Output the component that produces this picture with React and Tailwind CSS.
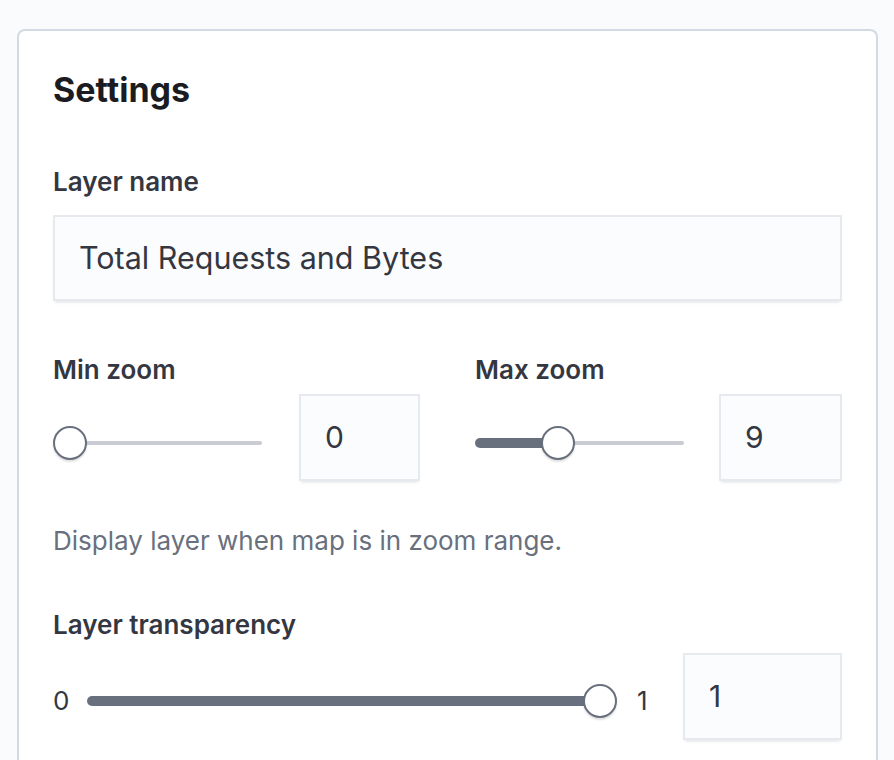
import React from 'react';

function RangeSlider({ value, max, filled }) {
  const pct = (value / max) * 100;
  return (
    <div className="relative h-[34px] flex-1">
      {/* track */}
      <div className="absolute left-[2px] right-0 top-1/2 h-[4px] -translate-y-1/2 rounded-full bg-[#c9ccd3]" />
      {filled && (
        <div
          className="absolute left-0 top-1/2 h-[10px] -translate-y-1/2 rounded-full bg-[#69707d]"
          style={{ width: `calc(${pct / 100} * (100% - 34px) + 17px)` }}
        />
      )}
      <div
        className="absolute top-0 h-[34px] w-[34px] rounded-full border-2 border-[#69707d] bg-white shadow-[0_2px_2px_rgba(0,0,0,0.12)]"
        style={{ left: `calc(${pct / 100} * (100% - 34px))` }}
      />
    </div>
  );
}

function NumberBox({ value, className = 'w-[121px]' }) {
  return (
    <div
      className={`${className} flex h-[87px] shrink-0 items-center border-2 border-[#e6e9ee] bg-[#fbfcfd] pl-[24px] text-[30px] text-[#343741] shadow-[0_3px_3px_-2px_rgba(152,162,179,0.35)]`}
    >
      {value}
    </div>
  );
}

function Label({ children, className = '' }) {
  return (
    <div className={`text-[26px] leading-[30px] font-semibold text-[#343741] ${className}`}>
      {children}
    </div>
  );
}

export default function App() {
  return (
    <div className="min-h-screen bg-[#fafbfd] pl-[17px] pr-[16px] pt-[29px] font-['Inter',sans-serif]">
      <div className="rounded-t-[8px] border-2 border-b-0 border-[#d3dae6] bg-white px-[34px] pt-[39px] pb-[60px]">
        <h2 className="text-[34px] leading-[40px] font-bold text-[#1a1c21]">Settings</h2>

        <Label className="mt-[57px]">Layer name</Label>
        <div className="mt-[18px] flex h-[86px] items-center border-2 border-[#e6e9ee] bg-[#fbfcfd] pl-[24px] text-[30.5px] text-[#343741] shadow-[0_3px_3px_-2px_rgba(152,162,179,0.35)]">
          Total Requests and Bytes
        </div>

        <div className="mt-[54px] grid grid-cols-2 gap-x-[55px]">
          <div>
            <Label>Min zoom</Label>
            <div className="mt-[9px] flex items-center gap-[37px]">
              <div className="flex flex-1 pt-[11px]">
                <RangeSlider value={0} max={24} />
              </div>
              <NumberBox value="0" />
            </div>
          </div>
          <div>
            <Label>Max zoom</Label>
            <div className="mt-[9px] flex items-center gap-[35px]">
              <div className="flex flex-1 pt-[11px]">
                <RangeSlider value={9} max={24} filled />
              </div>
              <NumberBox value="9" className="w-[123px]" />
            </div>
          </div>
        </div>

        <p className="mt-[45px] text-[26px] leading-[30px] text-[#69707d]">
          Display layer when map is in zoom range.
        </p>

        <Label className="mt-[54px]">Layer transparency</Label>
        <div className="mt-[13px] flex items-center">
          <span className="w-[34px] pt-[8px] text-[26px] text-[#343741]">0</span>
          <div className="flex flex-1 pt-[8px]">
            <RangeSlider value={1} max={1} filled />
          </div>
          <span className="w-[66px] pl-[20px] pt-[8px] text-[26px] text-[#343741]">1</span>
          <NumberBox value="1" className="w-[159px]" />
        </div>
      </div>
    </div>
  );
}
